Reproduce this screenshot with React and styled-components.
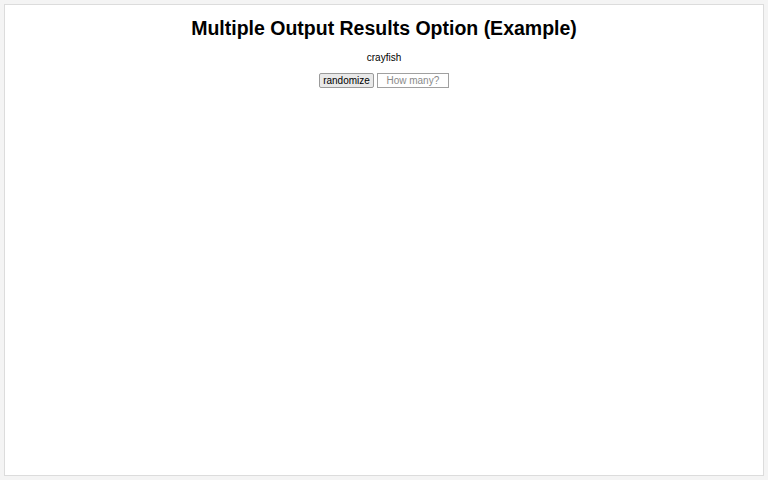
import React from "react";
import styled, { createGlobalStyle } from "styled-components";

const GlobalStyle = createGlobalStyle`
  html, body {
    margin: 0;
    padding: 0;
    background-color: #f4f4f4;
    font-family: "Liberation Sans", Arial, sans-serif;
  }
  body {
    padding: 4px;
  }
`;

const Card = styled.div`
  box-sizing: border-box;
  height: 472px;
  background-color: #ffffff;
  border: 1px solid #dcdcdc;
  display: flex;
  flex-direction: column;
  align-items: center;
`;

const Title = styled.h1`
  margin: 11px 0 0;
  font-size: 19.5px;
  font-weight: bold;
  color: #000;
  line-height: 24px;
`;

const Result = styled.div`
  margin-top: 11px;
  font-size: 10px;
  line-height: 14px;
  color: #000;
`;

const Controls = styled.div`
  margin-top: 8px;
  display: flex;
  gap: 3px;
  align-items: center;
`;

const Button = styled.button`
  box-sizing: border-box;
  height: 15px;
  padding: 0 3px;
  font-family: "Liberation Sans", Arial, sans-serif;
  font-size: 10px;
  color: #000;
  background-color: #e9e9e9;
  border: 1px solid #9a9a9a;
  border-radius: 2px;
`;

const CountInput = styled.input`
  box-sizing: border-box;
  width: 72px;
  height: 15px;
  padding: 0 4px;
  font-family: "Liberation Sans", Arial, sans-serif;
  font-size: 10px;
  text-align: center;
  border: 1px solid #a0a0a0;
  &::placeholder {
    color: #8a8a8a;
  }
`;

export default function App() {
  return (
    <>
      <GlobalStyle />
      <Card>
        <Title>Multiple Output Results Option (Example)</Title>
        <Result>crayfish</Result>
        <Controls>
          <Button>randomize</Button>
          <CountInput placeholder="How many?" />
        </Controls>
      </Card>
    </>
  );
}
